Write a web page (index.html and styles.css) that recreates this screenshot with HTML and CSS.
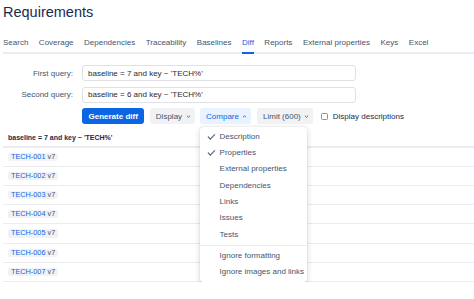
FILE: index.html
```html
<!DOCTYPE html>
<html lang="en">
<head>
    <meta charset="UTF-8">
    <title>Requirements</title>
    <link rel="stylesheet" href="styles.css">
</head>
<body>

<h1 class="page-title">Requirements</h1>

<nav class="tabs">
    <a class="tab">Search</a>
    <a class="tab">Coverage</a>
    <a class="tab">Dependencies</a>
    <a class="tab">Traceability</a>
    <a class="tab">Baselines</a>
    <a class="tab active">Diff</a>
    <a class="tab">Reports</a>
    <a class="tab">External properties</a>
    <a class="tab">Keys</a>
    <a class="tab">Excel</a>
</nav>

<div class="query-form">
    <label class="query-label" for="first_query">First query:</label>
    <input class="query-input" id="first_query" type="text" value="baseline = 7 and key ~ 'TECH%'">

    <label class="query-label" for="second_query">Second query:</label>
    <input class="query-input" id="second_query" type="text" value="baseline = 6 and key ~ 'TECH%'">

    <div></div>
    <div class="toolbar">
        <button class="btn btn-primary">Generate diff</button>
        <button class="btn btn-default">Display
            <svg class="chevron" viewBox="0 0 8 8"><polyline points="1.5,2.8 4,5.2 6.5,2.8"/></svg>
        </button>
        <div class="menu-wrap">
            <button class="btn btn-selected">Compare
                <svg class="chevron" viewBox="0 0 8 8"><polyline points="1.5,5.2 4,2.8 6.5,5.2"/></svg>
            </button>
            <div class="dropdown">
                <div class="dropdown-item checked">Description</div>
                <div class="dropdown-item checked">Properties</div>
                <div class="dropdown-item">External properties</div>
                <div class="dropdown-item">Dependencies</div>
                <div class="dropdown-item">Links</div>
                <div class="dropdown-item">Issues</div>
                <div class="dropdown-item">Tests</div>
                <div class="dropdown-divider"></div>
                <div class="dropdown-item">Ignore formatting</div>
                <div class="dropdown-item">Ignore images and links</div>
            </div>
        </div>
        <button class="btn btn-default">Limit (600)
            <svg class="chevron" viewBox="0 0 8 8"><polyline points="1.5,2.8 4,5.2 6.5,2.8"/></svg>
        </button>
        <label class="check-label"><span class="checkbox"></span>Display descriptions</label>
    </div>
</div>

<table class="diff-table">
    <thead>
        <tr><th>baseline = 7 and key ~ 'TECH%'</th></tr>
    </thead>
    <tbody>
        <tr><td><span class="req-badge"><span class="req-key">TECH-001</span> v7</span></td></tr>
        <tr><td><span class="req-badge"><span class="req-key">TECH-002</span> v7</span></td></tr>
        <tr><td><span class="req-badge"><span class="req-key">TECH-003</span> v7</span></td></tr>
        <tr><td><span class="req-badge"><span class="req-key">TECH-004</span> v7</span></td></tr>
        <tr><td><span class="req-badge"><span class="req-key">TECH-005</span> v7</span></td></tr>
        <tr><td><span class="req-badge"><span class="req-key">TECH-006</span> v7</span></td></tr>
        <tr><td><span class="req-badge"><span class="req-key">TECH-007</span> v7</span></td></tr>
    </tbody>
</table>

</body>
</html>
```

FILE: styles.css
```css
body {
    font-family: "Liberation Sans", Arial, sans-serif;
    margin: 0;
    padding: 0 0 0 3px;
    background: #fff;
    color: #172b4d;
    font-size: 8px;
}
.page-title {
    font-size: 14.5px;
    font-weight: normal;
    line-height: 18px;
    margin: 3px 0 0;
    color: #172b4d;
}
.tabs {
    display: flex;
    gap: 10.5px;
    margin-top: 17px;
    border-bottom: 2px solid #ebecf0;
}
.tab {
    color: #44546f;
    line-height: 10px;
    padding-bottom: 4px;
    margin-bottom: -2px;
    border-bottom: 2px solid transparent;
}
.tab.active {
    color: #0c66e4;
    border-bottom-color: #0c66e4;
}
.query-form {
    display: grid;
    grid-template-columns: 70px 274px;
    column-gap: 9px;
    row-gap: 5.5px;
    align-items: center;
    margin-top: 11px;
}
.query-label {
    text-align: right;
    color: #44546f;
}
.query-input {
    box-sizing: border-box;
    height: 16px;
    padding: 0 5px;
    border: 1px solid #dfe1e6;
    border-radius: 3px;
    font-family: inherit;
    font-size: 8px;
    color: #292a2e;
    outline: none;
}
.toolbar {
    display: flex;
    align-items: center;
    gap: 5.5px;
    white-space: nowrap;
}
.btn {
    display: flex;
    align-items: center;
    gap: 3.5px;
    height: 16px;
    padding: 0 4px 0 6px;
    border: none;
    border-radius: 3px;
    font-family: inherit;
    font-size: 8px;
    cursor: pointer;
}
.btn-primary {
    background: #0c66e4;
    color: #fff;
    font-weight: bold;
    padding: 0 6.5px;
}
.btn-default {
    background: #f1f2f4;
    color: #44546f;
}
.btn-selected {
    background: #e9f2ff;
    color: #0c66e4;
}
.chevron {
    width: 5px;
    height: 5px;
    fill: none;
    stroke: currentColor;
    stroke-width: 1.4;
}
.menu-wrap {
    position: relative;
}
.dropdown {
    position: absolute;
    top: 18.5px;
    left: 0;
    width: 107px;
    padding: 2px 0 1px;
    background: #fff;
    border-radius: 3px;
    box-shadow: 0 2px 6px rgba(9, 30, 66, 0.18), 0 0 1px rgba(9, 30, 66, 0.25);
    z-index: 2;
}
.dropdown-item {
    position: relative;
    height: 16.4px;
    line-height: 16.4px;
    padding-left: 19.5px;
    color: #44546f;
}
.dropdown-item.checked::before {
    content: "";
    position: absolute;
    left: 7.5px;
    top: 5px;
    width: 5.5px;
    height: 3px;
    border-left: 1.2px solid #44546f;
    border-bottom: 1.2px solid #44546f;
    transform: rotate(-45deg);
}
.dropdown-divider {
    height: 1px;
    margin: 1.5px 0 2px;
    background: #ebecf0;
}
.check-label {
    display: flex;
    align-items: center;
    gap: 5px;
    margin-left: 2px;
    color: #172b4d;
}
.checkbox {
    box-sizing: border-box;
    width: 7px;
    height: 7px;
    border: 1px solid #8590a2;
    border-radius: 1.5px;
}
.diff-table {
    width: 100%;
    border-collapse: collapse;
    margin-top: 0.5px;
}
.diff-table th {
    text-align: left;
    font-size: 7px;
    font-weight: bold;
    line-height: 9px;
    padding: 8px 5px 4px;
    border-bottom: 2px solid #ebecf0;
    color: #172b4d;
}
.diff-table td {
    padding: 5px 5px;
    line-height: 8.2px;
    border-bottom: 1px solid #ebecf0;
}
.req-badge {
    display: inline-block;
    padding: 0 3px;
    background: #f1f2f4;
    border-radius: 2px;
    font-size: 7.3px;
    color: #44546f;
}
.req-key {
    color: #0c66e4;
}
```
